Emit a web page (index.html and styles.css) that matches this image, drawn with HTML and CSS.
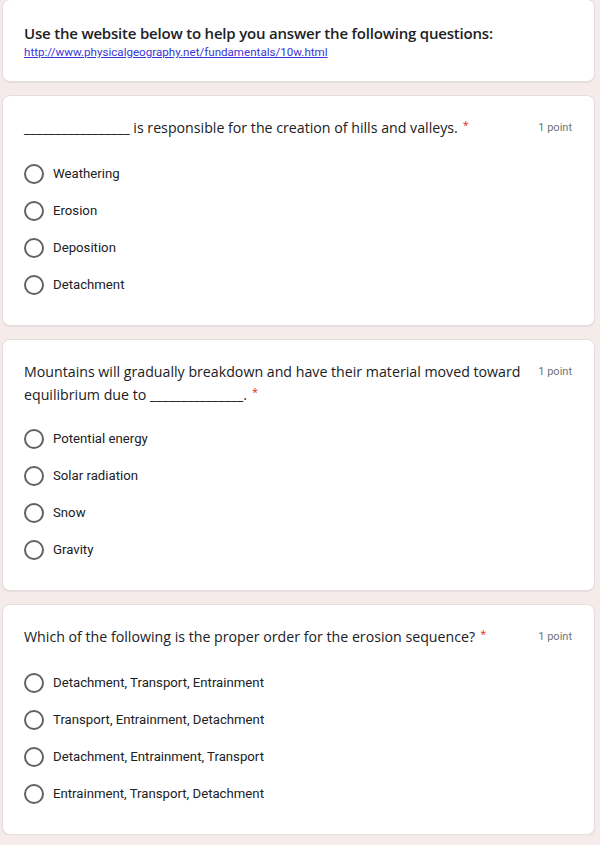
FILE: index.html
```html
<!DOCTYPE html>
<html lang="en">
<head>
<meta charset="utf-8">
<title>Erosion quiz</title>
<link rel="stylesheet" href="styles.css">
</head>
<body>
<main class="page">
  <section class="card intro">
    <div class="intro-title">Use the website below to help you answer the following questions:</div>
    <a class="intro-link" href="#">http://www.physicalgeography.net/fundamentals/10w.html</a>
  </section>

  <section class="card question">
    <div class="q-head">
      <div class="q-text">_________________ is responsible for the creation of hills and valleys.<span class="req">*</span></div>
      <div class="q-points">1 point</div>
    </div>
    <ul class="options">
      <li class="option"><span class="radio"></span><span class="opt-label">Weathering</span></li>
      <li class="option"><span class="radio"></span><span class="opt-label">Erosion</span></li>
      <li class="option"><span class="radio"></span><span class="opt-label">Deposition</span></li>
      <li class="option"><span class="radio"></span><span class="opt-label">Detachment</span></li>
    </ul>
  </section>

  <section class="card question">
    <div class="q-head">
      <div class="q-text">Mountains will gradually breakdown and have their material moved toward equilibrium due to _______________.<span class="req">*</span></div>
      <div class="q-points">1 point</div>
    </div>
    <ul class="options">
      <li class="option"><span class="radio"></span><span class="opt-label">Potential energy</span></li>
      <li class="option"><span class="radio"></span><span class="opt-label">Solar radiation</span></li>
      <li class="option"><span class="radio"></span><span class="opt-label">Snow</span></li>
      <li class="option"><span class="radio"></span><span class="opt-label">Gravity</span></li>
    </ul>
  </section>

  <section class="card question">
    <div class="q-head">
      <div class="q-text">Which of the following is the proper order for the erosion sequence?<span class="req">*</span></div>
      <div class="q-points">1 point</div>
    </div>
    <ul class="options">
      <li class="option"><span class="radio"></span><span class="opt-label">Detachment, Transport, Entrainment</span></li>
      <li class="option"><span class="radio"></span><span class="opt-label">Transport, Entrainment, Detachment</span></li>
      <li class="option"><span class="radio"></span><span class="opt-label">Detachment, Entrainment, Transport</span></li>
      <li class="option"><span class="radio"></span><span class="opt-label">Entrainment, Transport, Detachment</span></li>
    </ul>
  </section>
</main>
</body>
</html>
```

FILE: styles.css
```css
html, body {
  margin: 0;
  padding: 0;
  background: #f4ebea;
}

.page {
  display: flex;
  flex-direction: column;
  gap: 13px;
  padding: 0 5px 0 2px;
  font-family: Roboto, "Liberation Sans", sans-serif;
  color: #202124;
}

.card {
  background: #ffffff;
  border-radius: 8px;
  border: 1px solid #e4dede;
  box-shadow: 0 1px 1px rgba(0, 0, 0, 0.06);
}

.intro {
  padding: 22px 21px 21px;
  margin-top: -1px;
  display: flex;
  flex-direction: column;
}

.intro-title {
  font-family: "Open Sans", sans-serif;
  font-size: 15px;
  font-weight: 550;
  letter-spacing: -0.2px;
  line-height: 22px;
  color: #202124;
}

.intro-link {
  align-self: flex-start;
  font-family: Roboto, sans-serif;
  font-size: 11.6px;
  line-height: 16px;
  color: #3b34d8;
  text-decoration: underline;
}

.question {
  padding: 20px 21px 22px;
}

.q-head {
  display: flex;
  align-items: flex-start;
  gap: 12px;
  min-height: 25px;
}

.q-text {
  flex: 1;
  font-family: "Open Sans", sans-serif;
  font-size: 14.2px;
  line-height: 23px;
  color: #202124;
}

.req {
  margin-left: 5px;
  color: #d93025;
  font-size: 11px;
  line-height: 1;
  vertical-align: 4px;
}

.q-points {
  font-family: Roboto, sans-serif;
  font-size: 11px;
  line-height: 23px;
  color: #70757a;
  white-space: nowrap;
  padding-right: 1px;
}

.options {
  list-style: none;
  margin: 14px 0 0;
  padding: 0;
}

.option {
  display: flex;
  align-items: center;
  height: 37px;
}

.radio {
  box-sizing: border-box;
  width: 20px;
  height: 20px;
  border: 2px solid #5f6368;
  border-radius: 50%;
  flex: none;
}

.opt-label {
  margin-left: 9px;
  font-size: 13.2px;
  color: #202124;
}
```
